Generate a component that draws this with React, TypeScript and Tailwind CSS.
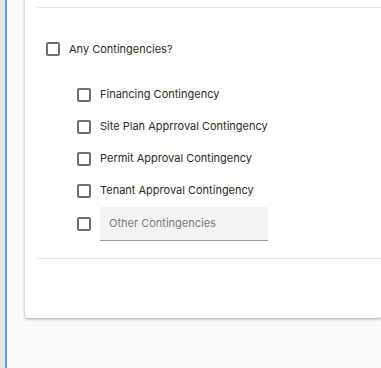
import React from 'react';

const subItems = [
  'Financing Contingency',
  'Site Plan Apprroval Contingency',
  'Permit Approval Contingency',
  'Tenant Approval Contingency',
];

function Box() {
  return <span className="block w-[14px] h-[14px] shrink-0 rounded-[2px] border-2 border-[#6f6f6f] bg-white" />;
}

export default function App() {
  return (
    <div className="flex h-[368px] w-[381px] overflow-hidden bg-[#fafafa] font-['Inter',sans-serif] text-[11px] text-[#2b2b2b]">
      <div className="w-[5px] bg-[#e4e6ea]" />
      <div className="w-[2px] bg-[#5b9bd8]" />
      <div className="flex-1 pl-[18px]">
        <div className="-mt-[10px] h-[328px] rounded-[2px] bg-white pl-3 shadow-[0_1px_3px_rgba(0,0,0,0.35)]">
          <div className="h-[18px] border-b border-[#e6e6e6]" />
          <label className="mt-[33px] flex items-center gap-[9px] pl-[9px]">
            <Box />
            <span>Any Contingencies?</span>
          </label>
          <div className="mt-[21px] flex flex-col pl-[40px]">
            {subItems.map(s => (
              <label key={s} className="flex h-[32px] items-center gap-[9px]">
                <Box />
                <span>{s}</span>
              </label>
            ))}
            <div className="flex items-center gap-[9px]">
              <Box />
              <div className="flex h-[34px] w-[168px] items-center border-b border-[#9a9a9a] bg-[#f3f3f3] px-[9px] text-[#7a7a7a]">
                Other Contingencies
              </div>
            </div>
          </div>
          <div className="mt-[17px] border-b border-[#e6e6e6]" />
        </div>
      </div>
    </div>
  );
}
